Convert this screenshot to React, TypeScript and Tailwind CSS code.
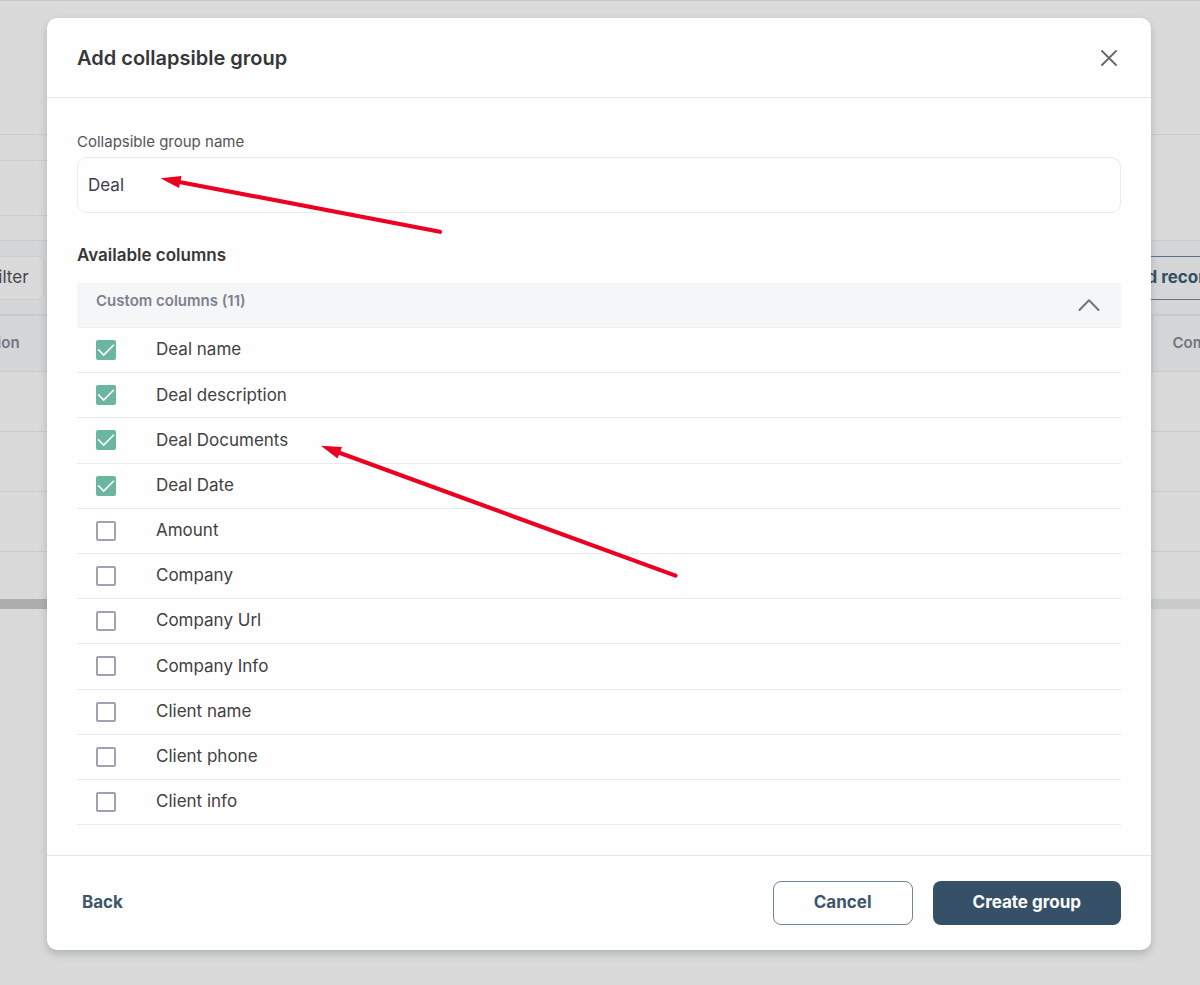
import { useState } from 'react'
import { clsx } from 'clsx'

interface Column {
  id: string
  label: string
  selected: boolean
}

const initialColumns: Column[] = [
  { id: 'deal-name', label: 'Deal name', selected: true },
  { id: 'deal-description', label: 'Deal description', selected: true },
  { id: 'deal-documents', label: 'Deal Documents', selected: true },
  { id: 'deal-date', label: 'Deal Date', selected: true },
  { id: 'amount', label: 'Amount', selected: false },
  { id: 'company', label: 'Company', selected: false },
  { id: 'company-url', label: 'Company Url', selected: false },
  { id: 'company-info', label: 'Company Info', selected: false },
  { id: 'client-name', label: 'Client name', selected: false },
  { id: 'client-phone', label: 'Client phone', selected: false },
  { id: 'client-info', label: 'Client info', selected: false }
]

function CloseIcon() {
  return (
    <svg className="size-4" viewBox="0 0 16 16" fill="none" stroke="#6b6b6d" strokeWidth="1.9" strokeLinecap="round">
      <path d="M1 1L15 15M15 1L1 15" />
    </svg>
  )
}

function ChevronIcon({ open }: { open: boolean }) {
  return (
    <svg
      className={clsx('h-3 w-[22px]', !open && 'rotate-180')}
      viewBox="0 0 22 12"
      fill="none"
      stroke="#757578"
      strokeWidth="2"
      strokeLinecap="round"
      strokeLinejoin="round"
    >
      <path d="M1.5 11L11 1.2L20.5 11" />
    </svg>
  )
}

// Records table behind the dialog, scrolled sideways
function RecordsPage() {
  return (
    <div className="-mx-20 border-t border-[#c6c6c6]" aria-hidden="true">
      <div className="h-[133px]" />
      <div className="h-[107px] border-y border-[#c9cbcb]">
        <div className="mt-[25px] h-14 w-1/2 border-y border-[#cccccc]" />
      </div>
      <div className="flex items-center justify-between border-b-2 border-[#c8cad0] bg-[#d4d6d8] pt-[15px] pr-[34px] pb-[14px] pl-4">
        <button className="h-11 rounded-md border border-[#cccdd3] bg-[#dadada] px-[14px] text-[17px] text-[#454547]">
          Add Filter
        </button>
        <button className="h-11 rounded-md border border-[#5f7287] px-5 text-[17px] font-bold text-[#364f63]">
          Add records
        </button>
      </div>
      <table className="w-full table-fixed border-collapse">
        <thead>
          <tr className="h-[55px] border-b border-[#c9cbcd] bg-[#d4d6d8] text-left text-[15px] text-[#727480]">
            <th className="pl-4 font-semibold">Description</th>
            <th className="w-32 border-l border-[#cbcdcf] pl-5 font-semibold">Company</th>
          </tr>
        </thead>
        <tbody>
          {[1, 2, 3].map((row) => (
            <tr key={row} className="h-[60px] border-b border-[#c8caca]">
              <td />
              <td />
            </tr>
          ))}
        </tbody>
      </table>
      <div className="mt-[47px] h-[10px] bg-[#c9cbca]">
        <div className="h-full w-1/2 bg-[#aeaeae]" />
      </div>
    </div>
  )
}

function ColumnRow({ column, onToggle }: { column: Column; onToggle: (id: string) => void }) {
  return (
    <li className="flex min-h-10 flex-1 items-center border-b border-[#ebebec]">
      <label className="flex flex-1 items-center gap-10 pl-[19px] text-[17px] text-[#414143]">
        <span className="relative size-5">
          <input
            type="checkbox"
            checked={column.selected}
            onChange={() => onToggle(column.id)}
            className="peer block size-5 appearance-none rounded-xs border-2 border-[#9fa3b1] bg-white checked:border-[#6ab6a1] checked:bg-[#6ab6a1]"
          />
          <svg
            className="pointer-events-none absolute inset-0 hidden size-5 peer-checked:block"
            viewBox="0 0 20 20"
            fill="none"
            stroke="white"
            strokeWidth="1.6"
            strokeLinecap="round"
          >
            <path d="M2.5 9.8L7.7 15L17.5 5.2" />
          </svg>
        </span>
        {column.label}
      </label>
    </li>
  )
}

// Red pointers drawn over the dialog
function Arrows() {
  return (
    <svg className="pointer-events-none absolute top-0 left-0 h-[600px] w-[700px]" viewBox="0 0 700 600" fill="#ec0022" stroke="#ec0022">
      <path d="M178 181.7L440 231.8" strokeWidth="4.2" strokeLinecap="round" />
      <path d="M160.5 178.2L181.5 176L179 188Z" stroke="none" />
      <path d="M338 452.3L675.5 575.6" strokeWidth="4.2" strokeLinecap="round" />
      <path d="M321 445.7L342 447L337.5 458.5Z" stroke="none" />
    </svg>
  )
}

export default function App() {
  const [groupName, setGroupName] = useState('Deal')
  const [columns, setColumns] = useState(initialColumns)
  const [open, setOpen] = useState(true)

  const toggleColumn = (id: string) => {
    setColumns(columns.map((c) => (c.id === id ? { ...c, selected: !c.selected } : c)))
  }

  return (
    <div className="relative min-h-screen overflow-hidden bg-[#dadada] font-[Inter,'Liberation_Sans',sans-serif]">
      <RecordsPage />

      <div className="absolute inset-0 flex pt-[18px] pr-[49px] pb-[35px] pl-[47px]">
        <div
          role="dialog"
          aria-labelledby="dialog-title"
          className="flex flex-1 flex-col rounded-[10px] bg-[#fefefe] shadow-[0_4px_8px_rgba(70,80,90,0.28)]"
        >
          <header className="flex h-20 items-center justify-between border-b border-[#e7e7e8] pr-[34px] pl-[30px]">
            <h2 id="dialog-title" className="text-xl font-semibold text-[#363638]">
              Add collapsible group
            </h2>
            <button aria-label="Close">
              <CloseIcon />
            </button>
          </header>

          <div className="flex flex-1 flex-col px-[30px] pt-8 pb-[30px]">
            <label htmlFor="group-name" className="pb-[3px] text-[15px] leading-6 text-[#555557]">
              Collapsible group name
            </label>
            <input
              id="group-name"
              type="text"
              value={groupName}
              onChange={(e) => setGroupName(e.target.value)}
              className="h-14 rounded-[10px] border border-[#ebebed] px-[10px] text-[17px] text-[#3c3d50] outline-none"
            />

            <h3 className="mt-7 mb-[14px] text-[17px] leading-7 font-semibold text-[#363638]">Available columns</h3>

            <button
              onClick={() => setOpen(!open)}
              className="flex h-[45px] items-center justify-between border-b border-[#efeff1] bg-[#f5f6f8] pr-[21px] pl-[19px]"
            >
              <span className="pb-[7px] text-[15px] font-semibold text-[#7f818f]">
                Custom columns ({columns.length})
              </span>
              <ChevronIcon open={open} />
            </button>
            {open && (
              <ul className="flex flex-1 flex-col">
                {columns.map((column) => (
                  <ColumnRow key={column.id} column={column} onToggle={toggleColumn} />
                ))}
              </ul>
            )}
          </div>

          <footer className="flex items-center gap-5 border-t border-[#e7e7e8] px-[30px] py-[25px] text-[17px] font-bold">
            <button className="mr-auto px-[5px] text-[#3d566b]">Back</button>
            <button className="h-11 rounded-lg border border-[#70859a] px-10 text-[#3d566b]">Cancel</button>
            <button className="h-11 rounded-lg bg-[#365167] px-10 text-white">Create group</button>
          </footer>
        </div>
      </div>

      <Arrows />
    </div>
  )
}
